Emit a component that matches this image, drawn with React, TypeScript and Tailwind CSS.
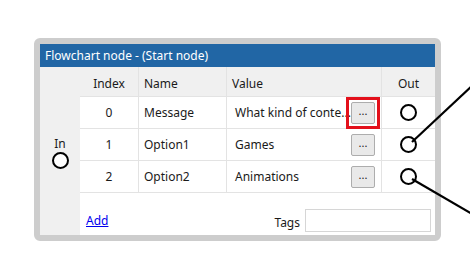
import React from 'react';

const rows = [
  { index: 0, name: 'Message', value: 'What kind of conte...', active: true },
  { index: 1, name: 'Option1', value: 'Games', active: false },
  { index: 2, name: 'Option2', value: 'Animations', active: false },
];

function Port() {
  return <span className="inline-block size-[17px] rounded-full border-2 border-black bg-white" />;
}

export default function App() {
  return (
    <div
      className="relative h-[272px] w-[470px] overflow-hidden bg-white text-[12px] text-[#1a1a1a]"
      style={{ fontFamily: '"Segoe UI", "Noto Sans", "Open Sans", sans-serif' }}
    >
      <div className="pl-[34px] pt-[38px]">
        <div className="flex h-[203px] w-[407px] flex-col rounded-[6px] border-[6px] border-[#cdcdcd] bg-white">
          <div className="flex h-[23px] items-center bg-[#2166a5] pl-[5px] text-white">
            Flowchart node - (Start node)
          </div>
          <div className="flex flex-1">
            <div className="flex w-[40px] flex-col items-center bg-[#f0f0f0] pt-[69px]">
              <span className="leading-[16px]">In</span>
              <Port />
            </div>
            <div className="flex flex-1 flex-col">
              <div className="grid grid-cols-[59px_88px_155px_1fr]">
                <div className="flex h-[30px] items-center justify-center border-b border-r border-[#e3e3e3] bg-[#f0f0f0] pt-[5px]">Index</div>
                <div className="flex h-[30px] items-center border-b border-r border-[#e3e3e3] bg-[#f0f0f0] pl-[5px] pt-[5px]">Name</div>
                <div className="flex h-[30px] items-center border-b border-r border-[#e3e3e3] bg-[#f0f0f0] pl-[5px] pt-[5px]">Value</div>
                <div className="flex h-[30px] items-center justify-center border-b border-[#e3e3e3] bg-[#f0f0f0] pt-[5px]">Out</div>
                {rows.map((r) => (
                  <React.Fragment key={r.index}>
                    <div className="flex h-[32px] items-center justify-center border-b border-r border-[#e3e3e3]">{r.index}</div>
                    <div className="flex h-[32px] items-center border-b border-r border-[#e3e3e3] pl-[5px]">{r.name}</div>
                    <div className="flex h-[32px] items-center justify-between border-b border-r border-[#e3e3e3] pl-[8px] pr-[6px]">
                      <span className="whitespace-nowrap">{r.value}</span>
                      <span
                        className={`-m-[5px] shrink-0 border-[3px] p-[2px] ${
                          r.active ? 'border-[#e3101b]' : 'border-transparent'
                        }`}
                      >
                        <button className="flex h-[22px] w-[24px] items-center justify-center rounded-[2px] border border-[#adadad] bg-[#e9e9e9] pb-[4px] text-[11px] leading-none">
                          ...
                        </button>
                      </span>
                    </div>
                    <div className="flex h-[32px] items-center justify-center border-b border-[#e3e3e3]">
                      <Port />
                    </div>
                  </React.Fragment>
                ))}
              </div>
              <div className="flex flex-1 items-end justify-between pb-[3px] pl-[6px] pr-[4px]">
                <a href="#" className="mb-[2px] text-[#0000ee] underline">Add</a>
                <div className="flex items-center gap-[5px]">
                  <span className="mt-[6px]">Tags</span>
                  <span className="block h-[23px] w-[126px] border border-[#d6d6d6] bg-white" />
                </div>
              </div>
            </div>
          </div>
        </div>
      </div>
      <svg className="pointer-events-none absolute left-0 top-0" width="470" height="272">
        <line x1="412" y1="142" x2="472" y2="86" stroke="black" strokeWidth="2.2" />
        <line x1="412" y1="179" x2="472" y2="214" stroke="black" strokeWidth="2.2" />
      </svg>
    </div>
  );
}
